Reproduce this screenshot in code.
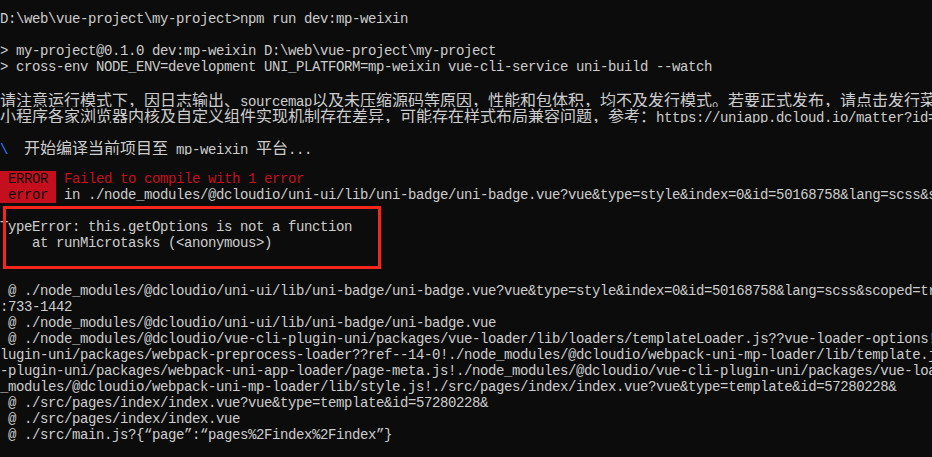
const CJK = /[\u3000-\u303f\u4e00-\u9fff\uff00-\uffef]+/

// split a line into runs so full-width chars get a 16px cell like the console
function Seg({ text }) {
  const parts = text.split(/([\u3000-\u303f\u4e00-\u9fff\uff00-\uffef]+)/)
  return parts.map((p, i) =>
    CJK.test(p) ? (
      <span key={i} className="text-[16px] tracking-normal font-['Noto_Sans_CJK_SC',sans-serif] leading-[16px]">
        {p}
      </span>
    ) : (
      <span key={i}>{p}</span>
    )
  )
}

function Line({ children, text }) {
  return (
    <div className="h-[16px] leading-[16px] whitespace-pre overflow-hidden">
      {text !== undefined ? <Seg text={text} /> : children}
    </div>
  )
}

function Badge({ label }) {
  return (
    <span className="inline-block align-top w-[56px] h-[16px] bg-[#c50f1f] text-[#0c0c0c] text-center">
      {label}
    </span>
  )
}

const Blank = () => <div className="h-[16px]" />

export default function App() {
  return (
    <div className="relative w-[932px] h-[457px] overflow-hidden bg-[#0c0c0c] text-[#cccccc] pt-[11px] text-[14px] tracking-[-0.4px] font-['Liberation_Mono',monospace]">
      <Line text="D:\web\vue-project\my-project>npm run dev:mp-weixin" />
      <Blank />
      <Line text="> my-project@0.1.0 dev:mp-weixin D:\web\vue-project\my-project" />
      <Line text="> cross-env NODE_ENV=development UNI_PLATFORM=mp-weixin vue-cli-service uni-build --watch" />
      <Blank />
      <Line text="请注意运行模式下，因日志输出、sourcemap以及未压缩源码等原因，性能和包体积，均不及发行模式。若要正式发布，请点击发行菜单" />
      <Line text="小程序各家浏览器内核及自定义组件实现机制存在差异，可能存在样式布局兼容问题，参考：https://uniapp.dcloud.io/matter?id=mp" />
      <Blank />
      <Line>
        <span className="text-[#3b78ff]">\</span>
        <span>{'  '}</span>
        <Seg text="开始编译当前项目至 mp-weixin 平台..." />
      </Line>
      <Blank />
      <Line>
        <Badge label="ERROR" />
        <span className="text-[#c50f1f]">{' Failed to compile with 1 error'}</span>
      </Line>
      <Line>
        <Badge label="error" />
        <span>{' in ./node_modules/@dcloudio/uni-ui/lib/uni-badge/uni-badge.vue?vue&type=style&index=0&id=50168758&lang=scss&scoped=true&'}</span>
      </Line>
      <Blank />
      <Line text="TypeError: this.getOptions is not a function" />
      <Line text="    at runMicrotasks (<anonymous>)" />
      <Blank />
      <Blank />
      <Line text=" @ ./node_modules/@dcloudio/uni-ui/lib/uni-badge/uni-badge.vue?vue&type=style&index=0&id=50168758&lang=scss&scoped=true&" />
      <Line text=":733-1442" />
      <Line text=" @ ./node_modules/@dcloudio/uni-ui/lib/uni-badge/uni-badge.vue" />
      <Line text=" @ ./node_modules/@dcloudio/vue-cli-plugin-uni/packages/vue-loader/lib/loaders/templateLoader.js??vue-loader-options!./node" />
      <Line text="lugin-uni/packages/webpack-preprocess-loader??ref--14-0!./node_modules/@dcloudio/webpack-uni-mp-loader/lib/template.js!" />
      <Line text="-plugin-uni/packages/webpack-uni-app-loader/page-meta.js!./node_modules/@dcloudio/vue-cli-plugin-uni/packages/vue-loader/" />
      <Line text="_modules/@dcloudio/webpack-uni-mp-loader/lib/style.js!./src/pages/index/index.vue?vue&type=template&id=57280228&" />
      <Line text=" @ ./src/pages/index/index.vue?vue&type=template&id=57280228&" />
      <Line text=" @ ./src/pages/index/index.vue" />
      <Line text=" @ ./src/main.js?{“page”:“pages%2Findex%2Findex”}" />

      {/* annotation box */}
      <div className="absolute left-[3px] top-[206px] w-[378px] h-[63px] border-[3px] border-[#f5261b]" />
    </div>
  )
}
